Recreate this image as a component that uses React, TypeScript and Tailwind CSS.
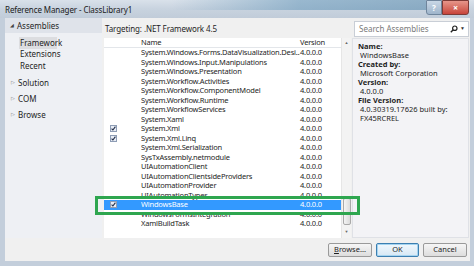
import React from 'react';

interface Assembly {
  name: string;
  version: string;
  checked?: boolean;
  selected?: boolean;
}

const assemblies: Assembly[] = [
  { name: 'System.Windows.Forms.DataVisualization.Desi...', version: '4.0.0.0' },
  { name: 'System.Windows.Input.Manipulations', version: '4.0.0.0' },
  { name: 'System.Windows.Presentation', version: '4.0.0.0' },
  { name: 'System.Workflow.Activities', version: '4.0.0.0' },
  { name: 'System.Workflow.ComponentModel', version: '4.0.0.0' },
  { name: 'System.Workflow.Runtime', version: '4.0.0.0' },
  { name: 'System.WorkflowServices', version: '4.0.0.0' },
  { name: 'System.Xaml', version: '4.0.0.0' },
  { name: 'System.Xml', version: '4.0.0.0', checked: true },
  { name: 'System.Xml.Linq', version: '4.0.0.0', checked: true },
  { name: 'System.Xml.Serialization', version: '4.0.0.0' },
  { name: 'SysTxAssembly.netmodule', version: '4.0.0.0' },
  { name: 'UIAutomationClient', version: '4.0.0.0' },
  { name: 'UIAutomationClientsideProviders', version: '4.0.0.0' },
  { name: 'UIAutomationProvider', version: '4.0.0.0' },
  { name: 'UIAutomationTypes', version: '4.0.0.0' },
  { name: 'WindowsBase', version: '4.0.0.0', checked: true, selected: true },
  { name: 'WindowsFormsIntegration', version: '4.0.0.0' },
  { name: 'XamlBuildTask', version: '4.0.0.0' },
];

const details: [string, string][] = [
  ['Name:', 'WindowsBase'],
  ['Created by:', 'Microsoft Corporation'],
  ['Version:', '4.0.0.0'],
  ['File Version:', '4.0.30319.17626 built by:'],
];

function Check() {
  return (
    <span className="w-[7px] h-[7px] border border-[#8e9db5] bg-[#e8edf6] flex items-center justify-center">
      <svg width="5" height="5" viewBox="0 0 5 5">
        <path d="M0.6 2.6 L1.9 4 L4.4 0.6" stroke="#1f2a44" strokeWidth="1.1" fill="none" />
      </svg>
    </span>
  );
}

export default function App() {
  return (
    <div
      className="relative w-[474px] h-[266px] overflow-hidden bg-[#c3cedb] text-[7.5px] text-[#1e1e1e] flex flex-col"
      style={{ fontFamily: '"Noto Sans", "Open Sans", sans-serif' }}
    >
      {/* title bar */}
      <div className="h-[18px] flex items-start bg-gradient-to-b from-[#d9e1ea] via-[#c8d3df] to-[#c1ccd9]">
        <span className="pl-[5px] pt-[4px] text-[8px] tracking-[-0.1px] text-[#202020]">Reference Manager - ClassLibrary1</span>
        <div className="flex-1 h-[10px] ml-[40px] bg-gradient-to-r from-transparent via-[#6f9dbd] to-[#5f8fb0] opacity-60" />
        <div className="flex h-[15px] mr-[5px]">
          <div className="w-[16px] h-[15px] bg-gradient-to-b from-[#c8d7e6] to-[#9fb5cb] border border-[#6f859c] rounded-bl-[3px] flex items-center justify-center text-[8px] text-white font-bold">?</div>
          <div className="w-[27px] h-[15px] bg-gradient-to-b from-[#e6958a] to-[#c7433a] border border-[#7d3a36] rounded-br-[3px] flex items-center justify-center text-[9px] text-white font-bold">×</div>
        </div>
      </div>

      {/* body */}
      <div className="flex-1 ml-[5px] mr-[4px] mb-[5px] bg-[#f0f0f0] flex flex-col">
        <div className="flex h-[220px]">
          {/* left nav */}
          <div className="w-[97px] bg-[#eef0f4] flex flex-col text-[8px]">
            <div className="h-[15px] bg-[#dfe3ea] flex items-center">
              <span className="ml-[5px] text-[5px] text-[#444]">◢</span>
              <span className="ml-[3px]">Assemblies</span>
            </div>
            <div className="mt-[4px] ml-[14px] w-[38px] h-[12px] bg-[#dcdde0] flex items-center pl-[1px]">Framework</div>
            <div className="ml-[15px] mt-[-1px] h-[12px] flex items-center">Extensions</div>
            <div className="ml-[15px] h-[11px] flex items-center">Recent</div>
            {['Solution', 'COM', 'Browse'].map((s, i) => (
              <div key={s} className={`flex items-center h-[16px] ${i === 0 ? 'mt-[4px]' : ''}`}>
                <span className="ml-[6px] text-[5px] text-[#777]">▷</span>
                <span className="ml-[3px]">{s}</span>
              </div>
            ))}
          </div>

          {/* center + details */}
          <div className="flex-1 flex flex-col ml-[2px]">
            <div className="h-[20px] flex items-center">
              <span className="ml-[1px] text-[8px] tracking-[-0.1px] mt-[1px]">Targeting: .NET Framework 4.5</span>
              <div className="ml-auto mr-[1px] w-[115px] h-[16px] mt-[1px] bg-white border border-[#c9ced6] flex items-center pl-[4px] pr-[3px]">
                <span className="text-[#7a7a7a] text-[8px]">Search Assemblies</span>
                <svg className="ml-auto" width="8" height="8" viewBox="0 0 8 8">
                  <circle cx="4.8" cy="3.2" r="2.2" stroke="#222" strokeWidth="1.2" fill="none" />
                  <path d="M3.2 4.8 L0.8 7.2" stroke="#222" strokeWidth="1.4" />
                </svg>
                <span className="ml-[2px] text-[5px] text-[#333]">▼</span>
              </div>
            </div>

            <div className="flex-1 flex">
              {/* list */}
              <div className="w-[237px] bg-white flex flex-col tracking-[-0.2px]">
                <div className="h-[10px] flex items-center border-b border-[#e3e6ea]">
                  <span className="ml-[37px] w-[159px]">Name</span>
                  <span>Version</span>
                </div>
                <div>
                  {assemblies.map((a) => (
                    <div
                      key={a.name}
                      className={`h-[9.5px] flex items-center whitespace-nowrap ${a.selected ? 'bg-[#3399ff] text-white' : ''}`}
                    >
                      <span className="w-[37px] flex pl-[6px]">{a.checked && <Check />}</span>
                      <span className="w-[159px] overflow-hidden">{a.name}</span>
                      <span>{a.version}</span>
                    </div>
                  ))}
                </div>
              </div>

              {/* scrollbar */}
              <div className="w-[10px] bg-[#f3f3f3] border-l border-[#e6e6e6] flex flex-col items-center">
                <span className="text-[4px] text-[#666] mt-[2px]">▲</span>
                <div className="flex-1" />
                <div className="w-[8px] h-[27px] mb-[4px] rounded-[2px] border border-[#a9a9a9] bg-gradient-to-r from-[#f4f4f4] to-[#dcdcdc]" />
                <span className="text-[4px] text-[#666] mb-[3px]">▼</span>
              </div>

              {/* details */}
              <div className="ml-[1px] w-[117px] bg-[#f3f3f6] border border-[#dfe1e6] pt-[3px] pl-[5px] leading-[9px]">
                {details.map(([k, v]) => (
                  <div key={k}>
                    <div className="font-bold">{k}</div>
                    <div className="pl-[2px]">{v}</div>
                  </div>
                ))}
                <div className="pl-[2px]">FX45RCREL</div>
              </div>
            </div>
          </div>
        </div>

        {/* buttons */}
        <div className="flex-1 flex items-center justify-end gap-[4px] pr-[3px]">
          <button className="w-[44px] h-[14px] border border-[#9a9a9a] rounded-[2px] bg-gradient-to-b from-[#f6f6f6] to-[#dddddd] text-[7.5px]">
            <span className="underline">B</span>rowse...
          </button>
          <button className="w-[43px] h-[14px] border border-[#3c7fb1] rounded-[2px] bg-gradient-to-b from-[#f1f8fd] to-[#d6e8f5] text-[7.5px] shadow-[inset_0_0_0_1px_#a5d4f0]">
            OK
          </button>
          <button className="w-[44px] h-[14px] border border-[#9a9a9a] rounded-[2px] bg-gradient-to-b from-[#f6f6f6] to-[#dddddd] text-[7.5px]">
            Cancel
          </button>
        </div>
      </div>

      {/* annotation highlight */}
      <div className="absolute left-[95px] top-[196px] w-[265px] h-[19px] border-[3px] border-[#2ea64f]" />
    </div>
  );
}
